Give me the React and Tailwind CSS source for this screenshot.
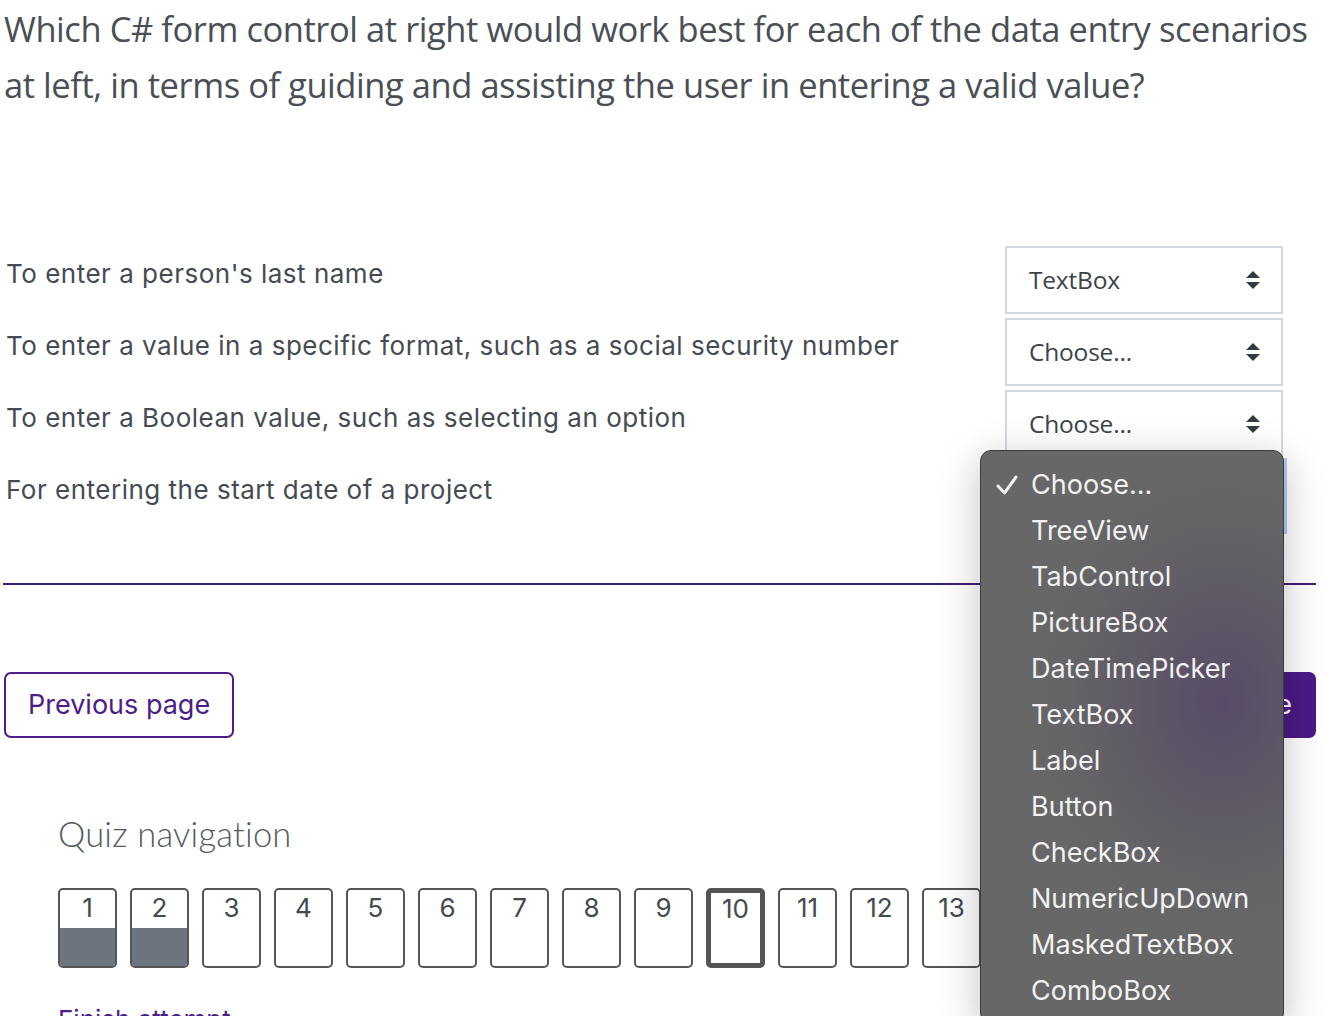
import React from 'react';

const rows = [
  ['To enter a person\'s last name', 'TextBox'],
  ['To enter a value in a specific format, such as a social security number', 'Choose...'],
  ['To enter a Boolean value, such as selecting an option', 'Choose...'],
  ['For entering the start date of a project', 'Choose...'],
];

const options = [
  'Choose...',
  'TreeView',
  'TabControl',
  'PictureBox',
  'DateTimePicker',
  'TextBox',
  'Label',
  'Button',
  'CheckBox',
  'NumericUpDown',
  'MaskedTextBox',
  'ComboBox',
];

function SortIcon() {
  return (
    <svg width="16" height="20" viewBox="0 0 16 20" className="text-[#343a40]">
      <path d="M8 1 L15 8 L1 8 Z" fill="currentColor" />
      <path d="M1 12 L15 12 L8 19 Z" fill="currentColor" />
    </svg>
  );
}

function Check() {
  return (
    <svg width="22" height="22" viewBox="0 0 22 22">
      <path d="M2 12 L8.5 19 L20 3" fill="none" stroke="#f2f2f2" strokeWidth="3" strokeLinecap="round" strokeLinejoin="round" />
    </svg>
  );
}

function Select({ value, focused }) {
  return (
    <div
      className={
        focused
          ? 'flex h-[68px] w-[278px] items-center justify-between border-2 border-[#8f6fc9] bg-white pl-[22px] pr-[20px] ring-4 ring-[#b5d0f2]'
          : 'flex h-[68px] w-[278px] items-center justify-between border-2 border-[#d3d8de] bg-white pl-[22px] pr-[20px]'
      }
      style={{ fontFamily: '"Open Sans", sans-serif' }}
    >
      <span className="text-[24.5px] tracking-[-0.2px] text-[#3d434a]">{focused ? '' : value}</span>
      <SortIcon />
    </div>
  );
}

export default function App() {
  return (
    <div
      className="relative h-[1016px] w-[1344px] overflow-hidden bg-white"
      style={{ fontFamily: 'Inter, "Noto Sans", sans-serif' }}
    >
      <div className="pl-[4px] pr-[28px]">
        <h1
          className="whitespace-nowrap pt-[1px] text-[34.5px] leading-[56px] tracking-[-0.45px] text-[#4a4f56]"
          style={{ fontFamily: '"Open Sans", sans-serif' }}
        >
          Which C# form control at right would work best for each of the data entry scenarios
          <br />
          at left, in terms of guiding and assisting the user in entering a valid value?
        </h1>

        <div className="mt-[133px] pr-[33px]">
          {rows.map(([label, value], i) => (
            <div key={i} className="mb-[4px] flex items-start justify-between">
              <span className="pl-[2px] pt-[9px] text-[26px] leading-[38px] tracking-[0.5px] text-[#454b52]">{label}</span>
              <Select value={value} focused={i === 3} />
            </div>
          ))}
        </div>

        <div className="mt-[53px] h-[2px] w-[1313px] -ml-[1px] bg-[#3f1d7a]" />

        <div className="mt-[87px] flex w-[1312px] items-center justify-between">
          <button className="h-[66px] rounded-[7px] border-2 border-[#4b1d88] px-[22px] text-[27px] text-[#4b1d88]">
            Previous page
          </button>
          <button className="h-[66px] rounded-[7px] bg-[#4b1a86] px-[24px] text-[27px] text-white">Next page</button>
        </div>

        <div className="pl-[54px]">
          <h2
            className="mt-[74px] text-[34.5px] font-light leading-[44px] tracking-[0.2px] text-[#555a60]"
            style={{ fontFamily: 'Lato, "Open Sans", sans-serif' }}
          >
            Quiz navigation
          </h2>
          <div className="mt-[32px] flex gap-[13px]">
            {Array.from({ length: 13 }, (_, i) => i + 1).map((n) => (
              <div
                key={n}
                className={
                  n === 10
                    ? 'flex h-[80px] w-[59px] flex-col overflow-hidden rounded-[5px] border-[5px] border-[#555555] bg-white'
                    : 'flex h-[80px] w-[59px] flex-col overflow-hidden rounded-[5px] border-2 border-[#555555] bg-white'
                }
              >
                <div
                  className={
                    n === 10
                      ? 'h-[35px] text-center text-[26px] leading-[32px] text-[#444a50]'
                      : 'h-[38px] text-center text-[26px] leading-[36px] text-[#444a50]'
                  }
                >
                  {n}
                </div>
                {n <= 2 && <div className="flex-1 bg-[#6c757d]" />}
              </div>
            ))}
          </div>
          <div className="mt-[37px] text-[26px] leading-[30px] text-[#4b1d88]">Finish attempt ...</div>
        </div>
      </div>

      <div
        className="absolute left-[980px] top-[450px] h-[574px] w-[304px] rounded-[11px] border border-[#3c3c3e] bg-[radial-gradient(ellipse_200px_240px_at_80%_44%,#584b68_0%,#5f5a66_45%,#646366_75%,#676767_100%)] pt-[11px] shadow-[0_10px_40px_rgba(0,0,0,0.25)]"
      >
        {options.map((opt, i) => (
          <div key={opt} className="flex h-[46px] items-center text-[27px] text-[#f2f2f2]">
            <span className="flex w-[50px] justify-center pl-[2px]">{i === 0 ? <Check /> : null}</span>
            <span>{opt}</span>
          </div>
        ))}
      </div>
    </div>
  );
}
